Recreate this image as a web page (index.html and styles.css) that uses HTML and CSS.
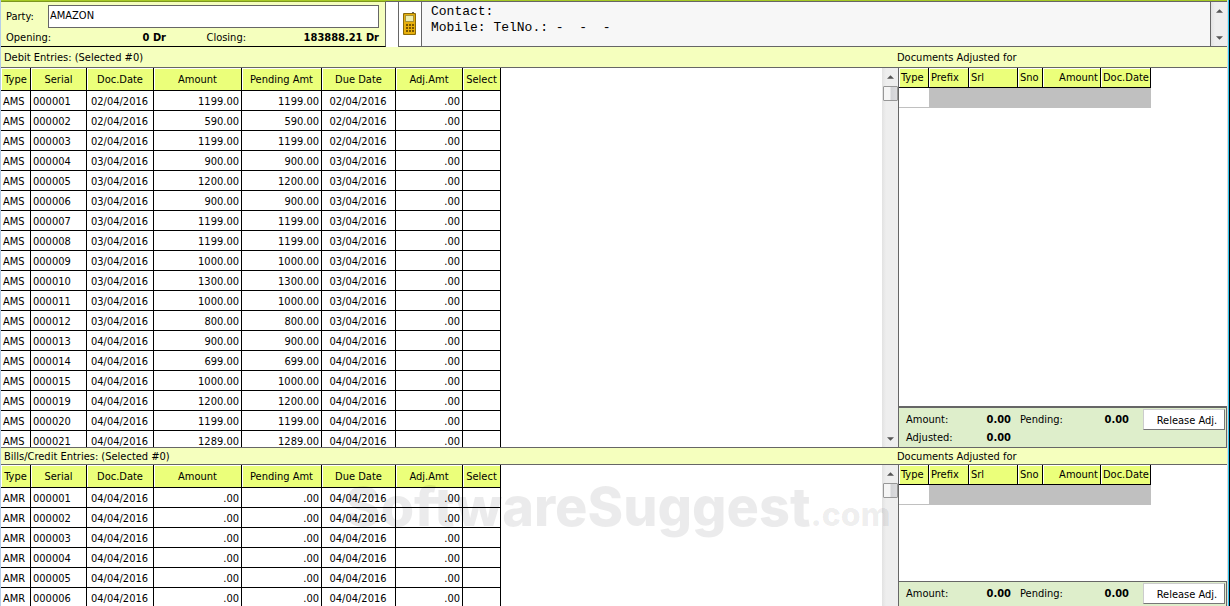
FILE: index.html
```
<!DOCTYPE html>
<html lang="en">
<head>
<meta charset="UTF-8">
<meta name="viewport" content="width=device-width, initial-scale=1.0">
<title>Party Adjustment</title>
<link rel="stylesheet" href="styles.css">
</head>
<body>

<header class="top">
  <div class="party">
    <div class="party-row">
      <label for="party">Party:</label>
      <input type="text" id="party" value="AMAZON">
    </div>
    <div class="balance-row">
      <span>Opening:</span>
      <b class="opening">0 Dr</b>
      <span class="closing-label">Closing:</span>
      <b class="closing">183888.21 Dr</b>
    </div>
  </div>
  <button class="phone" aria-label="Call party">
    <svg width="14" height="24" viewBox="0 0 14 24">
      <rect x="9" y="0" width="2" height="3" fill="#666"/>
      <rect x="0" y="1" width="13" height="22" rx="1" fill="#8a6a08"/>
      <rect x="1" y="2" width="11" height="20" rx="1" fill="#e8b00c"/>
      <rect x="2" y="3" width="9" height="7" fill="#a8933a"/>
      <rect x="3" y="4" width="7" height="5" fill="#eeeeb0"/>
      <path d="M3 13h2M6 13h2M9 13h2M3 16h2M6 16h2M9 16h2M3 19h2M6 19h2M9 19h2" stroke="#7a5600" stroke-width="2"/>
    </svg>
  </button>
  <div class="contact">Contact:
Mobile: TelNo.: -  -  -</div>
  <div class="scrollbar">
    <svg class="arrow" viewBox="0 0 8 4"><path d="M4 0L8 4H0z"/></svg>
    <svg class="arrow down" viewBox="0 0 8 4"><path d="M0 0H8L4 4z"/></svg>
  </div>
</header>

<section class="pane">
  <div class="pane-title">
    <h2>Debit Entries: (Selected #0)</h2>
    <h2 class="side-title">Documents Adjusted for</h2>
  </div>
  <div class="pane-body">
    <div class="grid-area">
      <table class="entries">
        <colgroup>
          <col class="c-type"><col class="c-serial"><col class="c-date"><col class="c-amount">
          <col class="c-pending"><col class="c-due"><col class="c-adj"><col class="c-select">
        </colgroup>
        <thead>
          <tr><th>Type</th><th>Serial</th><th>Doc.Date</th><th>Amount</th><th>Pending Amt</th><th>Due Date</th><th>Adj.Amt</th><th>Select</th></tr>
        </thead>
        <tbody id="debitRows"></tbody>
      </table>
    </div>
    <div class="scrollbar">
      <svg class="arrow" viewBox="0 0 8 4"><path d="M4 0L8 4H0z"/></svg>
      <div class="thumb"></div>
      <svg class="arrow down" viewBox="0 0 8 4"><path d="M0 0H8L4 4z"/></svg>
    </div>
    <div class="side">
      <div class="side-list">
        <table class="adjusted">
          <colgroup>
            <col class="c-type"><col class="c-prefix"><col class="c-srl"><col class="c-sno"><col class="c-amt"><col class="c-doc">
          </colgroup>
          <thead>
            <tr><th>Type</th><th>Prefix</th><th>Srl</th><th>Sno</th><th class="num">Amount</th><th>Doc.Date</th></tr>
          </thead>
          <tbody>
            <tr><td></td><td colspan="5"></td></tr>
          </tbody>
        </table>
      </div>
      <div class="totals">
        <div class="sums">
          <span>Amount:</span><b>0.00</b><span>Pending:</span><b>0.00</b>
          <span>Adjusted:</span><b>0.00</b>
        </div>
        <button class="release">Release Adj.</button>
      </div>
    </div>
  </div>
</section>

<section class="pane credit">
  <div class="pane-title">
    <h2>Bills/Credit Entries: (Selected #0)</h2>
    <h2 class="side-title">Documents Adjusted for</h2>
  </div>
  <div class="pane-body">
    <div class="grid-area">
      <table class="entries">
        <colgroup>
          <col class="c-type"><col class="c-serial"><col class="c-date"><col class="c-amount">
          <col class="c-pending"><col class="c-due"><col class="c-adj"><col class="c-select">
        </colgroup>
        <thead>
          <tr><th>Type</th><th>Serial</th><th>Doc.Date</th><th>Amount</th><th>Pending Amt</th><th>Due Date</th><th>Adj.Amt</th><th>Select</th></tr>
        </thead>
        <tbody id="creditRows"></tbody>
      </table>
    </div>
    <div class="scrollbar">
      <svg class="arrow" viewBox="0 0 8 4"><path d="M4 0L8 4H0z"/></svg>
      <div class="thumb"></div>
    </div>
    <div class="side">
      <div class="side-list">
        <table class="adjusted">
          <colgroup>
            <col class="c-type"><col class="c-prefix"><col class="c-srl"><col class="c-sno"><col class="c-amt"><col class="c-doc">
          </colgroup>
          <thead>
            <tr><th>Type</th><th>Prefix</th><th>Srl</th><th>Sno</th><th class="num">Amount</th><th>Doc.Date</th></tr>
          </thead>
          <tbody>
            <tr><td></td><td colspan="5"></td></tr>
          </tbody>
        </table>
      </div>
      <div class="totals">
        <div class="sums">
          <span>Amount:</span><b>0.00</b><span>Pending:</span><b>0.00</b>
        </div>
        <button class="release">Release Adj.</button>
      </div>
    </div>
  </div>
  <div class="watermark">SoftwareSuggest<small>.com</small></div>
</section>

<script>
  // serial, date, amount
  const debits = [
    ['000001', '02/04/2016', '1199.00'],
    ['000002', '02/04/2016', '590.00'],
    ['000003', '02/04/2016', '1199.00'],
    ['000004', '03/04/2016', '900.00'],
    ['000005', '03/04/2016', '1200.00'],
    ['000006', '03/04/2016', '900.00'],
    ['000007', '03/04/2016', '1199.00'],
    ['000008', '03/04/2016', '1199.00'],
    ['000009', '03/04/2016', '1000.00'],
    ['000010', '03/04/2016', '1300.00'],
    ['000011', '03/04/2016', '1000.00'],
    ['000012', '03/04/2016', '800.00'],
    ['000013', '04/04/2016', '900.00'],
    ['000014', '04/04/2016', '699.00'],
    ['000015', '04/04/2016', '1000.00'],
    ['000019', '04/04/2016', '1200.00'],
    ['000020', '04/04/2016', '1199.00'],
    ['000021', '04/04/2016', '1289.00']
  ];

  const credits = ['000001', '000002', '000003', '000004', '000005', '000006']
    .map(serial => [serial, '04/04/2016', '.00']);

  function fillRows(id, type, rows) {
    document.getElementById(id).innerHTML = rows.map(([serial, date, amount]) => `
      <tr>
        <td>${type}</td><td>${serial}</td><td class="date">${date}</td>
        <td class="num">${amount}</td><td class="num">${amount}</td>
        <td class="date">${date}</td><td class="num">.00</td><td></td>
      </tr>`).join('');
  }

  fillRows('debitRows', 'AMS', debits);
  fillRows('creditRows', 'AMR', credits);
</script>

</body>
</html>
```
FILE: styles.css
```
:root {
  --pale: #f5ffbe;
  --head: #ebff7a;
  --total: #deeecb;
  --line: #666;
}

* {
  box-sizing: border-box;
}

body {
  margin: 0;
  height: 100vh;
  display: grid;
  grid-template-rows: auto minmax(0, 400fr) minmax(0, 159fr);
  overflow: hidden;
  background: white;
  color: black;
  font-family: "DejaVu Sans Condensed", Tahoma, sans-serif;
  font-size: 11px;
  line-height: 14px;
  border-left: 1px solid #b4cdea;
  border-right: 1px solid black;
  box-shadow: inset -1px 0 #30c4f0, inset -2px 0 #ddd;
  padding-right: 2px;
}

button, input {
  font: inherit;
  color: inherit;
}

/* Party and contact */
.top {
  display: flex;
  height: 47px;
  border-top: 1px solid #a6ca24;
  box-shadow: inset 0 1px var(--line);
}

.party {
  width: 385px;
  background: var(--pale);
  border-top: 1px solid #7d9620;
  border-right: 1px solid var(--line);
  border-bottom: 1px solid black;
  padding: 3px 6px 0 5px;
}

.party-row {
  display: flex;
  align-items: center;
}

.party-row label {
  width: 42px;
}

.party-row input {
  flex: 1;
  min-width: 0;
  height: 23px;
  padding: 0 1px 3px;
  border: 1px solid var(--line);
  border-radius: 0;
  background: white;
}

.balance-row {
  display: grid;
  grid-template-columns: 80px 80px 80px 1fr;
  padding-top: 3px;
}

.opening, .closing {
  text-align: right;
}

.closing-label {
  text-align: right;
}

.phone {
  width: 24px;
  margin-left: 12px;
  padding: 4px 0 0;
  background: white;
  border: 1px solid var(--line);
}

.contact {
  flex: 1;
  min-width: 0;
  background: #f7f7f7;
  border: 1px solid var(--line);
  border-left: 0;
  padding: 2px 9px;
  font-family: "Liberation Mono", "Courier New", monospace;
  font-size: 13px;
  line-height: 16px;
  white-space: pre;
}

.top .scrollbar {
  border-top: 1px solid var(--line);
  border-bottom: 1px solid var(--line);
}

/* Scrollbars */
.scrollbar {
  width: 16px;
  display: flex;
  flex-direction: column;
  align-items: center;
  padding: 7px 0 6px;
  background: linear-gradient(to right, #e2e2e2, #eee 4px, #eee);
}

.arrow {
  width: 7px;
  height: 4px;
  fill: #555;
}

.arrow.down {
  margin-top: auto;
}

.thumb {
  width: 15px;
  height: 15px;
  margin-top: 7px;
  border: 1px solid #979797;
  border-radius: 1px;
  background: linear-gradient(to right, #f5f5f5 45%, #d2d3d6 55%, #dcdcde);
}

/* Entry panes */
.pane {
  display: flex;
  flex-direction: column;
  min-height: 0;
}

.pane-title {
  display: flex;
  align-items: center;
  height: 21px;
  background: var(--pale);
  border-bottom: 1px solid var(--line);
  padding: 2px 3px 0;
}

.credit .pane-title {
  height: 18px;
  border-top: 1px solid var(--line);
}

.pane-title h2 {
  flex: 1;
  margin: 0;
  font-size: 11px;
  font-weight: normal;
}

.pane-title .side-title {
  flex: 0 0 327px;
}

.pane-body {
  flex: 1;
  min-height: 0;
  display: flex;
}

.grid-area {
  flex: 1;
  min-width: 0;
  overflow: hidden;
}

table {
  table-layout: fixed;
  border-collapse: separate;
  border-spacing: 0;
}

th {
  font-weight: normal;
  background: var(--head);
  border-right: 1px solid black;
  border-bottom: 1px solid black;
  box-shadow: inset 1px 1px white;
  white-space: nowrap;
}

.entries {
  width: 500px;
}

.entries th {
  height: 23px;
  padding: 2px 0 0;
}

.entries td {
  height: 20px;
  padding: 3px 2px 0;
  border-right: 1px solid black;
  border-bottom: 1px solid black;
}

.entries .date {
  text-align: center;
  padding: 3px 1px 0 0;
}

.num {
  text-align: right;
}

.c-type { width: 30px; }
.c-serial { width: 56px; }
.c-date { width: 67px; }
.c-amount { width: 88px; }
.c-pending { width: 80px; }
.c-due { width: 74px; }
.c-adj { width: 67px; }
.c-select { width: 38px; }

/* Adjusted documents */
.side {
  width: 329px;
  display: flex;
  flex-direction: column;
  border-left: 1px solid var(--line);
}

.side-list {
  flex: 1;
  min-height: 0;
  overflow: hidden;
}

.adjusted {
  width: 252px;
}

.adjusted th {
  height: 20px;
  padding: 1px 2px 0;
  text-align: left;
}

.adjusted th.num {
  text-align: right;
}

.adjusted td {
  height: 20px;
  padding: 0;
  background: #c0c0c0;
}

.adjusted td:first-child {
  background: white;
  border-bottom: 1px solid #c0c0c0;
}

.c-prefix { width: 40px; }
.c-srl { width: 49px; }
.c-sno { width: 25px; }
.c-amt { width: 58px; }
.c-doc { width: 50px; }

.totals {
  height: 41px;
  display: flex;
  justify-content: space-between;
  align-items: flex-start;
  background: var(--total);
  border-top: 2px solid var(--line);
  border-right: 1px solid var(--line);
  padding: 1px 1px 0 7px;
}

.credit .totals {
  height: 25px;
  border-top-width: 1px;
}

.sums {
  display: grid;
  grid-template-columns: 60px 45px 60px 58px;
  line-height: 18px;
  padding-top: 2px;
}

.sums b {
  text-align: right;
}

.sums b + span {
  padding-left: 9px;
}

.sums span:nth-child(5) {
  padding-left: 0;
}

.release {
  width: 82px;
  height: 21px;
  padding: 2px 0 0 6px;
  white-space: nowrap;
  background: white;
  border: 1px solid #ccc;
  border-right-color: #777;
  border-bottom-color: #777;
}

/* Brand mark over the lower pane */
.watermark {
  position: absolute;
  left: 345px;
  top: 475px;
  font-family: Inter, sans-serif;
  font-size: 54px;
  font-weight: 800;
  line-height: 64px;
  color: rgba(0, 0, 10, 0.08);
  pointer-events: none;
}

.watermark small {
  font-size: 32px;
}
```
